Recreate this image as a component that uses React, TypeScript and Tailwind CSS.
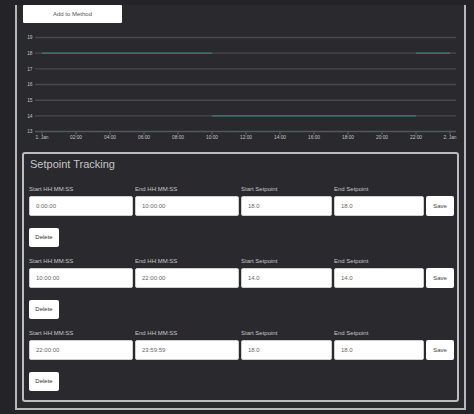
import React from "react";

const OX = 22; // svg left edge in page coords
const OY = 28; // svg top edge in page coords

const yOf = (v: number) => 37.5 + (19 - v) * 15.67 - OY;
const xOf = (i: number) => 42 + i * 34 - OX;

const xLabels = [
  "1. Jan",
  "02:00",
  "04:00",
  "06:00",
  "08:00",
  "10:00",
  "12:00",
  "14:00",
  "16:00",
  "18:00",
  "20:00",
  "22:00",
  "2. Jan",
];

const segments = [
  { from: 0, to: 5, v: 18 },
  { from: 5, to: 11, v: 14 },
  { from: 11, to: 12, v: 18 },
];

const rows = [
  { start: "0:00:00", end: "10:00:00", sp1: "18.0", sp2: "18.0" },
  { start: "10:00:00", end: "22:00:00", sp1: "14.0", sp2: "14.0" },
  { start: "22:00:00", end: "23:59:59", sp1: "18.0", sp2: "18.0" },
];

function Chart() {
  return (
    <svg width={437} height={124} className="block mt-[5px]">
      {[19, 18, 17, 16, 15, 14, 13].map((v) => (
        <g key={v}>
          <line
            x1={35 - OX}
            x2={456 - OX}
            y1={yOf(v)}
            y2={yOf(v)}
            stroke={v === 13 ? "#56575c" : "#48494e"}
            strokeWidth={1.4}
          />
          <text
            x={32.5 - OX}
            y={yOf(v) + 1.7}
            fontSize={4.8}
            fill="#c4c4c4"
            textAnchor="end"
          >
            {v}
          </text>
        </g>
      ))}
      {xLabels.map((l, i) => (
        <g key={l}>
          <line
            x1={xOf(i)}
            x2={xOf(i)}
            y1={yOf(13)}
            y2={yOf(13) + 3.5}
            stroke="#6a6b70"
            strokeWidth={0.8}
          />
          <text
            x={xOf(i)}
            y={139.2 - OY}
            fontSize={4.8}
            fill="#c4c4c4"
            textAnchor="middle"
          >
            {l}
          </text>
        </g>
      ))}
      {segments.map((s, i) => (
        <line
          key={i}
          x1={xOf(s.from)}
          x2={xOf(s.to)}
          y1={yOf(s.v)}
          y2={yOf(s.v)}
          stroke="#3e7d74"
          strokeWidth={1.4}
        />
      ))}
    </svg>
  );
}

function Field({ value }: { value: string }) {
  return (
    <input
      readOnly
      value={value}
      className="h-[20px] w-full bg-white rounded-[2px] border border-[#cfcfcf] px-[6px] text-[6px] text-[#666] outline-none"
    />
  );
}

function Label({ text }: { text: string }) {
  return (
    <div className="h-[10px] leading-[10px] text-[6px] text-[#c4c4c4]">
      {text}
    </div>
  );
}

export default function App() {
  return (
    <div className="w-[474px] h-[414px] overflow-hidden bg-[#242428] font-['Liberation_Sans',Arial,sans-serif]">
      <div className="ml-[15px] w-[451px] border-x-2 border-b-2 border-[#b8b8b8] bg-[#2a2a2e] px-[5px] pb-[6px]">
        <button className="ml-[1px] mt-[5px] block h-[18px] w-[99px] rounded-[1px] bg-white text-[6px] text-[#555]">
          Add to Method
        </button>

        <Chart />

        <div className="rounded-[3px] border-2 border-[#bdbdbd] pt-[2px] px-[5px] pb-[9px]">
          <h2 className="ml-[1px] h-[16px] leading-[16px] text-[11px] text-[#c4c4c4]">
            Setpoint Tracking
          </h2>
          {rows.map((r, i) => (
            <div key={i} className={i === 0 ? "mt-[12px]" : "mt-[9px]"}>
              <div className="grid grid-cols-[104px_104px_91px_90px_28px] gap-x-[2px] gap-y-[2px]">
                <Label text="Start HH:MM:SS" />
                <Label text="End HH:MM:SS" />
                <Label text="Start Setpoint" />
                <Label text="End Setpoint" />
                <div />
                <Field value={r.start} />
                <Field value={r.end} />
                <Field value={r.sp1} />
                <Field value={r.sp2} />
                <button className="h-[20px] rounded-[2px] bg-white text-[6px] text-[#444]">
                  Save
                </button>
              </div>
              <button className="mt-[12px] block h-[19px] w-[30px] rounded-[2px] bg-white text-[6px] text-[#333]">
                Delete
              </button>
            </div>
          ))}
        </div>
      </div>
    </div>
  );
}
